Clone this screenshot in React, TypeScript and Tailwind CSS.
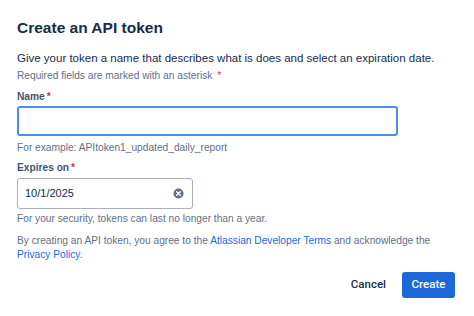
import { useState } from 'react';

const Asterisk = () => <span className="text-[#C9372C] ml-[2px]">*</span>;

const ClearIcon = () => (
  <svg width="11" height="11" viewBox="0 0 12 12" aria-hidden>
    <circle cx="6" cy="6" r="5.5" fill="#626F86" />
    <path d="M4 4l4 4M8 4l-4 4" stroke="#fff" strokeWidth="1.6" strokeLinecap="round" />
  </svg>
);

export default function App() {
  const [name, setName] = useState('');
  const [expires, setExpires] = useState('10/1/2025');

  return (
    <div className="w-[474px] h-[316px] bg-white px-[17px] pt-[18px] font-['Liberation_Sans',Arial,sans-serif] text-[#172B4D]">
      <h1 className="text-[15.5px] leading-[20px] font-bold">Create an API token</h1>

      <p className="mt-[12px] text-[11.5px] leading-[16px]">
        Give your token a name that describes what is does and select an expiration date.
      </p>
      <p className="mt-[3px] text-[10.2px] leading-[14px] text-[#626F86]">
        Required fields are marked with an asterisk <Asterisk />
      </p>

      <label className="block mt-[7px] text-[10.2px] leading-[14px] font-bold text-[#44546F]">
        Name<Asterisk />
      </label>
      <input
        value={name}
        onChange={(e) => setName(e.target.value)}
        className="mt-[2px] block w-[381px] h-[30px] rounded-[3px] border-2 border-[#4C8FEA] px-[6px] text-[11.5px] outline-none"
      />
      <p className="mt-[5px] text-[10.2px] leading-[14px] text-[#626F86]">
        For example: APItoken1_updated_daily_report
      </p>

      <label className="block mt-[6px] text-[10.2px] leading-[14px] font-bold text-[#44546F]">
        Expires on<Asterisk />
      </label>
      <div className="mt-[3px] flex items-center w-[176px] h-[31px] rounded-[3px] border border-[#A9B0BC] pl-[7px] pr-[8px]">
        <input
          value={expires}
          onChange={(e) => setExpires(e.target.value)}
          className="flex-1 min-w-0 text-[11px] text-[#172B4D] outline-none bg-transparent"
        />
        <button onClick={() => setExpires('')} className="flex items-center">
          <ClearIcon />
        </button>
      </div>
      <p className="mt-[3px] text-[10.2px] leading-[14px] text-[#626F86]">
        For your security, tokens can last no longer than a year.
      </p>

      <p className="mt-[8px] text-[10.2px] leading-[14px] text-[#626F86]">
        By creating an API token, you agree to the{' '}
        <a className="text-[#1D68D8]">Atlassian Developer Terms</a> and acknowledge the
        <br />
        <a className="text-[#1D68D8]">Privacy Policy</a>.
      </p>

      <div className="mt-[10px] flex justify-end gap-[6px] pr-[2px]">
        <button className="h-[26px] px-[10px] rounded-[3px] text-[11.5px] font-medium font-['Roboto',sans-serif] text-[#172B4D]">
          Cancel
        </button>
        <button className="h-[26px] w-[53px] rounded-[3px] bg-[#1D68D8] text-[11.5px] font-medium font-['Roboto',sans-serif] text-white">
          Create
        </button>
      </div>
    </div>
  );
}
